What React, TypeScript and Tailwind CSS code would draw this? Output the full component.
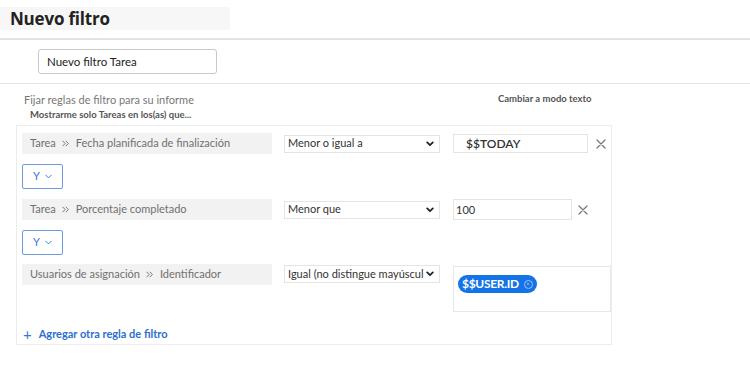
import React from 'react';

const font = { fontFamily: 'Lato, "Noto Sans", sans-serif' };

const Chevron: React.FC<{ className?: string }> = ({ className }) => (
  <svg viewBox="0 0 10 6" className={className} fill="none" stroke="currentColor" strokeWidth="1.4" strokeLinecap="round" strokeLinejoin="round">
    <path d="M1 1l4 4 4-4" />
  </svg>
);

const SelectChevron: React.FC = () => (
  <svg viewBox="0 0 10 7" className="w-[8px] h-[6px] text-[#222] shrink-0" fill="none" stroke="currentColor" strokeWidth="2.2" strokeLinecap="round" strokeLinejoin="round">
    <path d="M1.5 1.5l3.5 3.5 3.5-3.5" />
  </svg>
);

const Close: React.FC = () => (
  <svg viewBox="0 0 10 10" className="w-[10px] h-[10px] text-[#777]" fill="none" stroke="currentColor" strokeWidth="1.2" strokeLinecap="round">
    <path d="M1 1l8 8M9 1l-8 8" />
  </svg>
);

const Field: React.FC<{ left: string; right: string }> = ({ left, right }) => (
  <div className="ml-[5px] w-[250px] h-[21px] bg-[#f2f2f2] flex items-center pl-[8px] text-[11px] text-[#707070] shrink-0">
    <span>{left}</span>
    <svg viewBox="0 0 10 8" className="mx-[6px] w-[8px] h-[7px] text-[#666]" fill="none" stroke="currentColor" strokeWidth="1.1" strokeLinecap="round" strokeLinejoin="round">
      <path d="M1 1l3 3-3 3M5 1l3 3-3 3" />
    </svg>
    <span>{right}</span>
  </div>
);

const Select: React.FC<{ label: string }> = ({ label }) => (
  <div className="ml-[12px] w-[156px] h-[18px] border border-[#e4e4e4] bg-white flex items-center justify-between pl-[3px] pr-[5px] text-[11px] text-[#333] shrink-0 overflow-hidden">
    <span className="whitespace-nowrap overflow-hidden">{label}</span>
    <SelectChevron />
  </div>
);

const AndButton: React.FC = () => (
  <div className="ml-[5px] mt-[10px] w-[41px] h-[25px] border border-[#6a9be0] rounded-[2px] flex items-center justify-center gap-[5px] text-[#3b78d8] text-[11px]">
    <span>Y</span>
    <Chevron className="w-[7px] h-[5px]" />
  </div>
);

export default function App() {
  return (
    <div className="w-[750px] h-[367px] bg-white overflow-hidden" style={font}>
      <div className="h-[38px] pt-[7px]">
        <div className="w-[230px] h-[23px] bg-[#f7f7f7] pl-[10px] flex items-center">
          <span className="text-[17px] font-bold text-[#222] leading-none tracking-[-0.2px]" style={{ fontFamily: '"Open Sans", "Noto Sans", sans-serif' }}>Nuevo filtro</span>
        </div>
      </div>
      <div className="border-t-2 border-[#e2e2e2] h-[45px] pt-[9px] pl-[38px]">
        <div className="w-[179px] h-[25px] border border-[#c8c8c8] rounded-[3px] flex items-center pl-[8px] text-[11.5px] text-[#222]">
          Nuevo filtro Tarea
        </div>
      </div>
      <div className="border-t border-[#e4e4e4] relative">
        <div className="pl-[24px] pt-[9px] text-[11px] text-[#777] leading-[14px]">Fijar reglas de filtro para su informe</div>
        <div className="pl-[30px] pt-[2px] text-[9.5px] font-bold text-[#555] leading-[12px]">Mostrarme solo Tareas en los(as) que...</div>
        <div className="absolute left-[498px] top-[8px] text-[9.5px] font-bold text-[#555]">Cambiar a modo texto</div>
      </div>
      <div className="ml-[16px] mt-[4px] w-[596px] h-[220px] border border-[#ececec] pt-[7px]">
        <div className="flex items-center">
          <Field left="Tarea" right="Fecha planificada de finalización" />
          <Select label="Menor o igual a" />
          <div className="ml-[13px] w-[135px] h-[19px] border border-[#e4e4e4] flex items-center pl-[12px] text-[12px] font-semibold text-[#333]">$$TODAY</div>
          <div className="ml-[8px]"><Close /></div>
        </div>
        <AndButton />
        <div className="flex items-center mt-[10px]">
          <Field left="Tarea" right="Porcentaje completado" />
          <Select label="Menor que" />
          <div className="ml-[13px] w-[119px] h-[21px] border border-[#e4e4e4] flex items-center pl-[2px] pt-[2px] text-[11px] text-[#333]">100</div>
          <div className="ml-[6px]"><Close /></div>
        </div>
        <AndButton />
        <div className="flex items-start mt-[9px]">
          <Field left="Usuarios de asignación" right="Identificador" />
          <div className="mt-[1px]"><Select label="Igual (no distingue mayúscul" /></div>
          <div className="ml-[13px] mt-[2px] w-[159px] h-[46px] border border-[#e8e8e8] pl-[4px] pt-[3px]">
            <div className="inline-flex items-center h-[18px] rounded-full bg-[#1473e6] pl-[4px] pr-[4px] gap-[5px]">
              <span className="text-[12px] font-bold text-white leading-none tracking-[-0.3px]">$$USER.ID</span>
              <span className="w-[9px] h-[9px] rounded-full border border-[#9ec3f5] flex items-center justify-center">
                <svg viewBox="0 0 6 6" className="w-[4px] h-[4px]" fill="none" stroke="#9ec3f5" strokeWidth="1"><path d="M1 1l4 4M5 1l-4 4" /></svg>
              </span>
            </div>
          </div>
        </div>
        <div className="flex items-center mt-[14px] pl-[6px]">
          <span className="text-[15px] text-[#3b78d8] leading-none">+</span>
          <span className="ml-[7px] text-[11px] font-bold text-[#2d6fcf]">Agregar otra regla de filtro</span>
        </div>
      </div>
    </div>
  );
}
